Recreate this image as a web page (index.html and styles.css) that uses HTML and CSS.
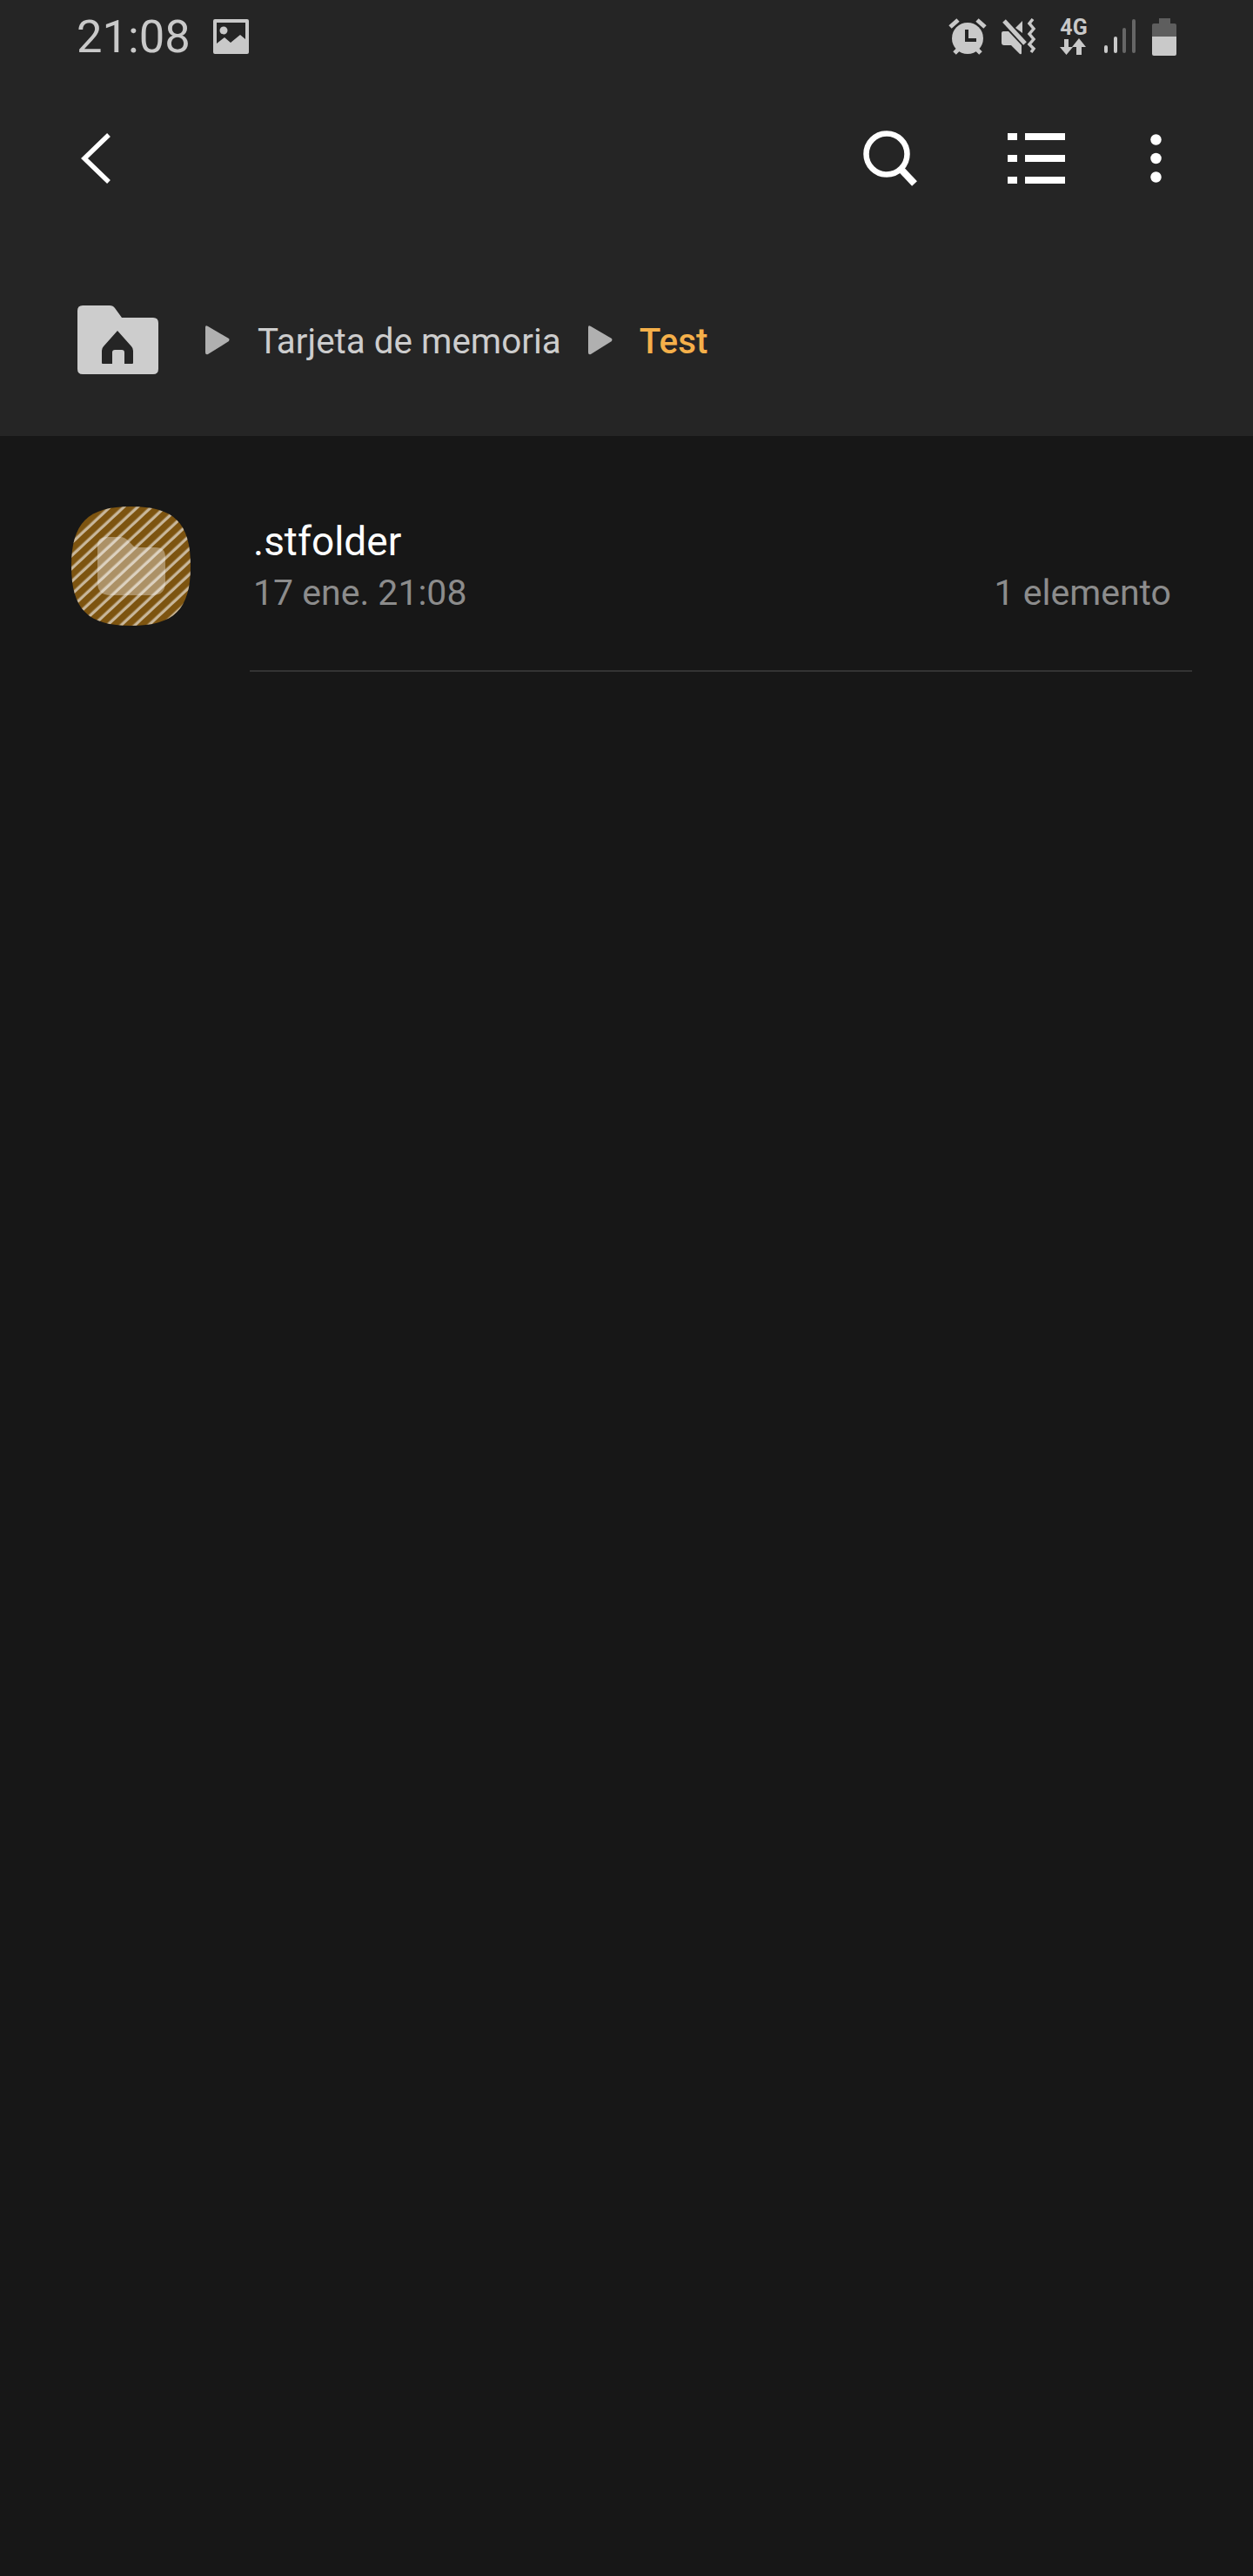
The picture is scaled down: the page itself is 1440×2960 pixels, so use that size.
FILE: index.html
```html
<!DOCTYPE html>
<html lang="es">
<head>
  <meta charset="UTF-8" />
  <title>Mis archivos</title>
  <link rel="stylesheet" href="styles.css">
</head>
<body>

<header class="top">
  <div class="status">
    <span class="time">21:08</span>
    <svg class="ic-pic" width="41" height="40" viewBox="0 0 41 40">
      <path fill-rule="evenodd" fill="#c9c9c9" d="M2 0h37a2 2 0 0 1 2 2v36a2 2 0 0 1-2 2H2a2 2 0 0 1-2-2V2a2 2 0 0 1 2-2zM4 4v24l9-7 7 6 11-9 6 5V4z"/>
      <circle cx="12" cy="13" r="4.5" fill="#c9c9c9"/>
    </svg>
    <div class="status-right">
      <svg class="ic-alarm" width="44" height="42" viewBox="0 0 44 42">
        <circle cx="22" cy="23" r="18" fill="#c9c9c9"/>
        <path d="M2 10l9-8M42 10l-9-8" stroke="#c9c9c9" stroke-width="5" fill="none"/>
        <path d="M7 40l5-5M37 40l-5-5" stroke="#c9c9c9" stroke-width="5" fill="none"/>
        <path d="M21 13v12h11" stroke="#252525" stroke-width="4" fill="none"/>
      </svg>
      <svg class="ic-mute" width="42" height="42" viewBox="0 0 42 42">
        <path fill="#c9c9c9" d="M2 15h6l15 16v9q0 2-2 1L11 31H3q-3 0-3-3V17q0-2 2-2zM16 11l8-8v14z"/>
        <path d="M3 3l24 26" stroke="#c9c9c9" stroke-width="5" fill="none"/>
        <path d="M36 1l-4 5 5 6-5 6 5 6-5 6 5 5-3 4" stroke="#c9c9c9" stroke-width="3.5" fill="none"/>
      </svg>
      <div class="net">
        <span class="net-label">4G</span>
        <svg width="32" height="21" viewBox="0 0 32 21">
          <path fill="#c9c9c9" d="M5 2h5v9h5l-7.500 9L0 11h5zM22 1l8 10h-5v9h-6v-9h-5z"/>
        </svg>
      </div>
      <svg class="ic-signal" width="36" height="40" viewBox="0 0 36 40">
        <rect x="0" y="30" width="4" height="9" rx="2" fill="#c9c9c9"/>
        <rect x="11" y="20" width="4" height="19" rx="2" fill="#c9c9c9"/>
        <rect x="21" y="10" width="4" height="29" rx="2" fill="#666"/>
        <rect x="32" y="0" width="4" height="39" rx="2" fill="#666"/>
      </svg>
      <svg class="ic-batt" width="28" height="43" viewBox="0 0 28 43">
        <path fill="#5e5e5e" d="M8 0h13v6h5q2 0 2 2v14H0V8q0-2 2-2h6z"/>
        <path fill="#c9c9c9" d="M0 21h28v20q0 2-2 2H2q-2 0-2-2z"/>
      </svg>
    </div>
  </div>

  <div class="toolbar">
    <svg class="btn-back" width="34" height="58" viewBox="0 0 34 58">
      <path d="M32 2L4 29l28 27" stroke="#fff" stroke-width="5.500" fill="none"/>
    </svg>
    <div class="tool-right">
      <svg width="62" height="64" viewBox="0 0 62 64">
        <circle cx="27" cy="27" r="23.500" stroke="#fff" stroke-width="6.500" fill="none"/>
        <path d="M43 44l16 17" stroke="#fff" stroke-width="8" fill="none"/>
      </svg>
      <svg class="ic-list" width="66" height="58" viewBox="0 0 66 58">
        <path fill="#fff" d="M0 0h11v8H0zM20 0h46v8H20zM0 25h11v8H0zM20 25h46v8H20zM0 50h11v8H0zM20 50h46v8H20z"/>
      </svg>
      <svg class="ic-more" width="13" height="56" viewBox="0 0 13 56">
        <circle cx="6.500" cy="6.500" r="6.250" fill="#fff"/>
        <circle cx="6.500" cy="28" r="6.250" fill="#fff"/>
        <circle cx="6.500" cy="49.500" r="6.250" fill="#fff"/>
      </svg>
    </div>
  </div>

  <nav class="crumbs">
    <svg class="ic-home" width="93" height="79" viewBox="0 0 93 79">
      <path fill="#cdcdcd" d="M6 0h31q4 0 6 3l8 11h36q6 0 6 6v53q0 6-6 6H6q-6 0-6-6V6q0-6 6-6z"/>
      <path fill="#252525" d="M46 29l16 18q2 2 2 5v14q0 1-1 1h-9V54q0-3-3-3h-8q-3 0-3 3v13H29q-1 0-1-1V52q0-3 2-5z"/>
    </svg>
    <svg class="sep" width="28" height="35" viewBox="0 0 28 35">
      <path fill="#b0b0b0" d="M0 3q0-3 3-1l24 14q1 1 0 3L3 34q-3 1-3-2z"/>
    </svg>
    <span class="crumb">Tarjeta de memoria</span>
    <svg class="sep" width="28" height="35" viewBox="0 0 28 35">
      <path fill="#b0b0b0" d="M0 3q0-3 3-1l24 14q1 1 0 3L3 34q-3 1-3-2z"/>
    </svg>
    <span class="crumb current">Test</span>
  </nav>
</header>

<main class="files">
  <div class="file-row">
    <svg class="file-icon" width="137" height="137" viewBox="0 0 137 137">
      <defs>
        <pattern id="hatch" width="10.800" height="10.800" patternUnits="userSpaceOnUse" patternTransform="rotate(-43)">
          <rect y="7.500" width="10.800" height="3.300" fill="#fff" fill-opacity=".58"/>
        </pattern>
      </defs>
      <path fill="#7d5410" d="M68.500 0C118 0 137 19 137 68.500S118 137 68.500 137 0 118 0 68.500 19 0 68.500 0z"/>
      <path fill="#fff" fill-opacity=".36" d="M40 35h16q5 0 9 4l6 6 2 2h24q11 0 11 11v29q0 15-15 15H45q-15 0-15-15V45q0-10 10-10z"/>
      <path fill="url(#hatch)" d="M68.500 0C118 0 137 19 137 68.500S118 137 68.500 137 0 118 0 68.500 19 0 68.500 0z"/>
    </svg>
    <div class="file-body">
      <div class="file-name">.stfolder</div>
      <div class="file-meta">
        <span>17 ene. 21:08</span>
        <span>1 elemento</span>
      </div>
    </div>
  </div>
</main>

</body>
</html>
```

FILE: styles.css
```css
body {
  margin: 0;
  width: 1440px;
  min-height: 2960px;
  background: #171717;
  font-family: Roboto, "Liberation Sans", sans-serif;
  overflow: hidden;
}
svg {
  display: block;
  flex: none;
}

.top {
  background: #252525;
  height: 501px;
}

/* barra de estado */
.status {
  display: flex;
  align-items: center;
  height: 84px;
  padding: 0 88px 0 88px;
  color: #c9c9c9;
}
.time {
  font-size: 52.5px;
  line-height: 84px;
}
.ic-pic {
  margin-left: 26px;
}
.status-right {
  display: flex;
  align-items: center;
  margin-left: auto;
}
.ic-mute {
  margin-left: 17px;
}
.net {
  margin-left: 25px;
  width: 32px;
  display: flex;
  flex-direction: column;
  align-items: center;
}
.net-label {
  font-size: 25px;
  font-weight: 700;
  line-height: 22px;
}
.ic-signal {
  margin-left: 19px;
}
.ic-batt {
  margin-left: 19px;
}

.toolbar {
  display: flex;
  align-items: center;
  height: 100px;
  margin-top: 48px;
  padding: 0 105px 0 93px;
}
.tool-right {
  display: flex;
  align-items: center;
  margin-left: auto;
}
.ic-list {
  margin-left: 104px;
}
.ic-more {
  margin-left: 98px;
}

/* ruta */
.crumbs {
  display: flex;
  align-items: center;
  height: 79px;
  margin-top: 119px;
  padding-left: 89px;
  font-size: 40.4px;
  color: #cdcdcd;
}
.crumbs .sep {
  margin-left: 54px;
}
.crumb {
  margin: 3px 0 0 32px;
}
.crumb + .sep {
  margin-left: 31px;
}
.current {
  margin-left: 31px;
  color: #f5b04a;
  font-weight: 500;
}

.file-row {
  display: flex;
  padding: 81px 70px 0 82px;
}
.file-body {
  flex: 1;
  height: 188px;
  margin-left: 68px;
  padding: 0 24px 0 4px;
  border-bottom: 2px solid #333;
}
.file-name {
  font-size: 46px;
  line-height: 54px;
  margin-top: 13px;
  color: #fff;
}
.file-meta {
  display: flex;
  justify-content: space-between;
  font-size: 41px;
  line-height: 50px;
  margin-top: 7px;
  color: #8c8c8c;
}
```
